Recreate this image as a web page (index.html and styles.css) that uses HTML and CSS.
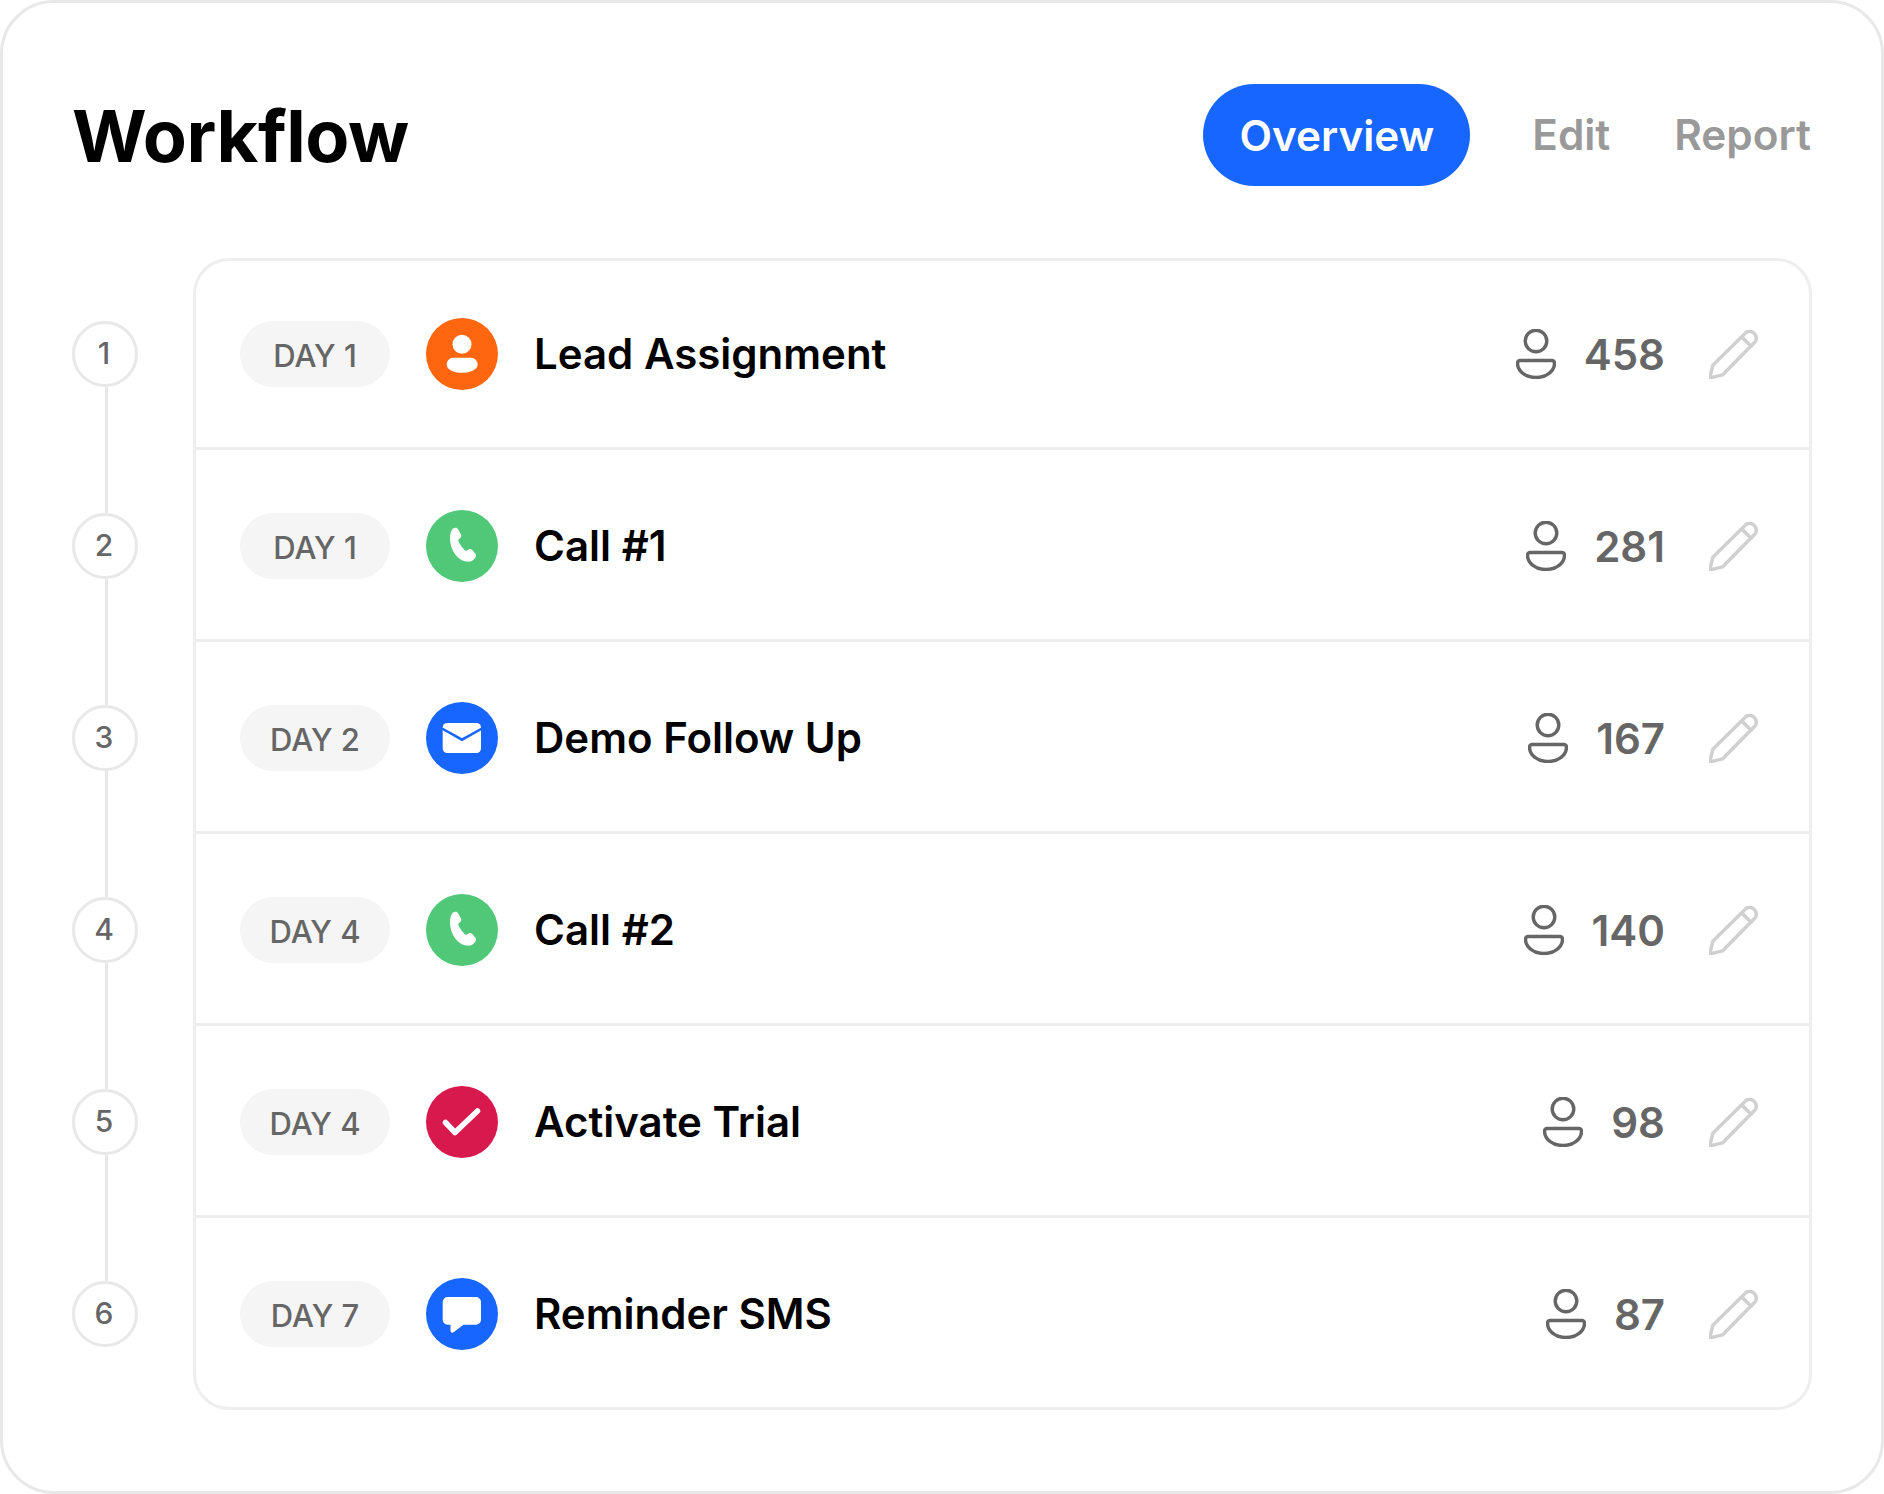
FILE: index.html
```html
<!DOCTYPE html>
<html lang="en">
<head>
    <meta charset="UTF-8">
    <title>Workflow</title>
    <link rel="stylesheet" href="styles.css">
</head>
<body>
    <div class="card">
        <header class="header">
            <h1>Workflow</h1>
            <nav class="tabs">
                <a class="tab active">Overview</a>
                <a class="tab">Edit</a>
                <a class="tab">Report</a>
            </nav>
        </header>

        <div class="content">
            <div class="steps">
                <div class="step">1</div>
                <div class="connector"></div>
                <div class="step">2</div>
                <div class="connector"></div>
                <div class="step">3</div>
                <div class="connector"></div>
                <div class="step">4</div>
                <div class="connector"></div>
                <div class="step">5</div>
                <div class="connector"></div>
                <div class="step">6</div>
            </div>

            <div class="list">
                <div class="row">
                    <span class="day">DAY 1</span>
                    <span class="badge orange">
                        <svg viewBox="0 0 72 72"><circle cx="36" cy="26.3" r="9.5"/><path d="M27 39.700h18a6.700 6.700 0 0 1 6.700 6.700c0 5-7 8.300-15.700 8.300s-15.300-3.300-15.300-8.300a6.700 6.700 0 0 1 6.300-6.700z"/></svg>
                    </span>
                    <span class="name">Lead Assignment</span>
                    <span class="count">
                        <svg class="user" viewBox="0 0 40 50"><circle cx="20" cy="12" r="10.8"/><path d="M4 31.500h32a2.500 2.500 0 0 1 2.500 2.500c0 8.300-8.300 14.500-18.500 14.500S1.500 42.300 1.500 34A2.500 2.500 0 0 1 4 31.500z"/></svg>
                        458
                    </span>
                    <svg class="pencil" viewBox="1 .5 48.500 49"><path d="M1.500 48.500l3-12.500L37 4a6.500 6.500 0 0 1 9 9L14 45.500zM33 8.500l9 9"/></svg>
                </div>
                <div class="row">
                    <span class="day">DAY 1</span>
                    <span class="badge green">
                        <svg viewBox="0 0 72 72"><path d="M27 18.500c1.500-1 4-1 5 .5l3 5.500c.6 1.200.3 2.500-.7 3.400l-1.600 1.400c-.5.5-.6 1-.3 1.800 1.500 3.500 3.700 6.800 6.800 9.400.5.4 1 .4 1.600.1l1.900-1.200c1.100-.7 2.400-.5 3.300.4l3.200 3.600c1.400 1.500.8 3.600-.6 5.200-1.600 1.800-3.700 3.500-6 3C32 52 24 40 24 28c0-4 1-7.500 3-9.500z"/></svg>
                    </span>
                    <span class="name">Call #1</span>
                    <span class="count">
                        <svg class="user" viewBox="0 0 40 50"><circle cx="20" cy="12" r="10.8"/><path d="M4 31.500h32a2.500 2.500 0 0 1 2.500 2.500c0 8.300-8.300 14.500-18.500 14.500S1.500 42.300 1.500 34A2.500 2.500 0 0 1 4 31.500z"/></svg>
                        281
                    </span>
                    <svg class="pencil" viewBox="1 .5 48.500 49"><path d="M1.500 48.500l3-12.500L37 4a6.500 6.500 0 0 1 9 9L14 45.500zM33 8.500l9 9"/></svg>
                </div>
                <div class="row">
                    <span class="day">DAY 2</span>
                    <span class="badge blue">
                        <svg viewBox="0 0 72 72"><rect x="16.700" y="21" width="38.300" height="30" rx="4.500"/><path class="cut" d="M16 26.500l20 11.200 20-11.200"/></svg>
                    </span>
                    <span class="name">Demo Follow Up</span>
                    <span class="count">
                        <svg class="user" viewBox="0 0 40 50"><circle cx="20" cy="12" r="10.8"/><path d="M4 31.500h32a2.500 2.500 0 0 1 2.500 2.500c0 8.300-8.300 14.500-18.500 14.500S1.500 42.300 1.500 34A2.500 2.500 0 0 1 4 31.500z"/></svg>
                        167
                    </span>
                    <svg class="pencil" viewBox="1 .5 48.500 49"><path d="M1.500 48.500l3-12.500L37 4a6.500 6.500 0 0 1 9 9L14 45.500zM33 8.500l9 9"/></svg>
                </div>
                <div class="row">
                    <span class="day">DAY 4</span>
                    <span class="badge green">
                        <svg viewBox="0 0 72 72"><path d="M27 18.500c1.500-1 4-1 5 .5l3 5.500c.6 1.200.3 2.500-.7 3.400l-1.600 1.400c-.5.5-.6 1-.3 1.800 1.500 3.500 3.700 6.800 6.800 9.400.5.4 1 .4 1.600.1l1.900-1.200c1.100-.7 2.400-.5 3.300.4l3.200 3.600c1.400 1.500.8 3.600-.6 5.200-1.600 1.800-3.700 3.500-6 3C32 52 24 40 24 28c0-4 1-7.500 3-9.500z"/></svg>
                    </span>
                    <span class="name">Call #2</span>
                    <span class="count">
                        <svg class="user" viewBox="0 0 40 50"><circle cx="20" cy="12" r="10.8"/><path d="M4 31.500h32a2.500 2.500 0 0 1 2.500 2.500c0 8.300-8.300 14.500-18.500 14.500S1.500 42.300 1.500 34A2.500 2.500 0 0 1 4 31.500z"/></svg>
                        140
                    </span>
                    <svg class="pencil" viewBox="1 .5 48.500 49"><path d="M1.500 48.500l3-12.500L37 4a6.500 6.500 0 0 1 9 9L14 45.500zM33 8.500l9 9"/></svg>
                </div>
                <div class="row">
                    <span class="day">DAY 4</span>
                    <span class="badge red">
                        <svg viewBox="0 0 72 72"><path class="tick" d="M19.500 36.500l9.500 10 22.500-21.500"/></svg>
                    </span>
                    <span class="name">Activate Trial</span>
                    <span class="count">
                        <svg class="user" viewBox="0 0 40 50"><circle cx="20" cy="12" r="10.8"/><path d="M4 31.500h32a2.500 2.500 0 0 1 2.500 2.500c0 8.300-8.300 14.500-18.500 14.500S1.500 42.300 1.500 34A2.500 2.500 0 0 1 4 31.500z"/></svg>
                        98
                    </span>
                    <svg class="pencil" viewBox="1 .5 48.500 49"><path d="M1.500 48.500l3-12.500L37 4a6.500 6.500 0 0 1 9 9L14 45.500zM33 8.500l9 9"/></svg>
                </div>
                <div class="row">
                    <span class="day">DAY 7</span>
                    <span class="badge blue">
                        <svg viewBox="0 0 72 72"><path d="M21.700 19h28.300a5 5 0 0 1 5 5v17.700a5 5 0 0 1-5 5H37.500l-10 7.600c-1.200.9-3 .2-3-1.500v-6.100h-2.800a5 5 0 0 1-5-5V24a5 5 0 0 1 5-5z"/></svg>
                    </span>
                    <span class="name">Reminder SMS</span>
                    <span class="count">
                        <svg class="user" viewBox="0 0 40 50"><circle cx="20" cy="12" r="10.8"/><path d="M4 31.500h32a2.500 2.500 0 0 1 2.500 2.500c0 8.300-8.300 14.500-18.500 14.500S1.500 42.300 1.500 34A2.500 2.500 0 0 1 4 31.500z"/></svg>
                        87
                    </span>
                    <svg class="pencil" viewBox="1 .5 48.500 49"><path d="M1.500 48.500l3-12.500L37 4a6.500 6.500 0 0 1 9 9L14 45.500zM33 8.500l9 9"/></svg>
                </div>
            </div>
        </div>
    </div>
</body>
</html>
```

FILE: styles.css
```css
:root {
    --blue: #1766ff;
    --orange: #ff660f;
    --green: #50c878;
    --red: #d8194e;
    --border-outer: #e8e8e8;
    --border: #eeeeee;
    --muted: #666666;
}

* {
    box-sizing: border-box;
}

body {
    margin: 0;
    background-color: #ffffff;
    font-family: Inter, 'Liberation Sans', sans-serif;
    color: #000000;
}

.card {
    width: 1884px;
    height: 1494px;
    padding: 81px 69px 81px 69px;
    background-color: #ffffff;
    border: 3px solid var(--border-outer);
    border-radius: 54px;
}

.header {
    display: flex;
    justify-content: space-between;
    align-items: center;
    height: 102px;
    margin-bottom: 72px;
}

h1 {
    margin: 0;
    font-size: 72px;
    font-weight: 700;
    letter-spacing: -.4px;
}

.tabs {
    display: flex;
    align-items: center;
    gap: 64px;
    padding: 0 1px 2px 0;
}

.tab {
    font-size: 42.3px;
    font-weight: 600;
    color: #999999;
}

.tab.active {
    display: flex;
    align-items: center;
    justify-content: center;
    width: 267px;
    height: 102px;
    padding-bottom: 0;
    margin: 2px -2px 0 0;
    background-color: var(--blue);
    border-radius: 51px;
    color: #ffffff;
}

.content {
    display: flex;
    gap: 55px;
}

.steps {
    display: flex;
    flex-direction: column;
    align-items: flex-start;
    width: 66px;
    padding-top: 63px;
}

.step {
    display: flex;
    align-items: center;
    justify-content: center;
    flex: none;
    width: 66px;
    height: 66px;
    padding: 0 2px 3px 0;
    border: 3px solid var(--border-outer);
    border-radius: 50%;
    font-size: 30px;
    font-weight: 550;
    color: var(--muted);
}

.connector {
    width: 3px;
    height: 126px;
    margin-left: 33px;
    background-color: var(--border-outer);
}

.list {
    flex: 1;
    height: 1152px;
    border: 3px solid var(--border);
    border-radius: 36px;
}

.row {
    display: flex;
    align-items: center;
    height: 192px;
    padding: 3px 50px 0 44px;
    border-bottom: 3px solid var(--border);
}

.row:first-child {
    height: 189px;
    padding-top: 0;
}

.row:last-child {
    height: 189px;
    border-bottom: none;
}

.day {
    display: flex;
    align-items: center;
    justify-content: center;
    flex: none;
    width: 150px;
    height: 66px;
    padding-top: 2px;
    background-color: #f5f5f5;
    border-radius: 33px;
    font-size: 31px;
    font-weight: 550;
    color: var(--muted);
}

.badge {
    flex: none;
    width: 72px;
    height: 72px;
    margin: 0 36px;
    border-radius: 50%;
}

.badge svg {
    display: block;
    fill: #ffffff;
}

.orange { background-color: var(--orange); }
.green { background-color: var(--green); }
.blue { background-color: var(--blue); }
.red { background-color: var(--red); }

.cut {
    fill: none;
    stroke: var(--blue);
    stroke-width: 2.5;
}

.tick {
    fill: none;
    stroke: #ffffff;
    stroke-width: 5.5;
    stroke-linecap: round;
    stroke-linejoin: round;
}

.name {
    flex: 1;
    padding-bottom: 2px;
    font-size: 42px;
    font-weight: 600;
}

.count {
    display: flex;
    align-items: center;
    gap: 28px;
    font-size: 42px;
    font-weight: 600;
    color: var(--muted);
}

.user {
    width: 40px;
    height: 50px;
    fill: none;
    stroke: var(--muted);
    stroke-width: 3.4;
}

.pencil {
    flex: none;
    width: 50px;
    height: 50px;
    margin-left: 44px;
    fill: none;
    stroke: #d0d0d0;
    stroke-width: 3.4;
    stroke-linejoin: round;
}
```
